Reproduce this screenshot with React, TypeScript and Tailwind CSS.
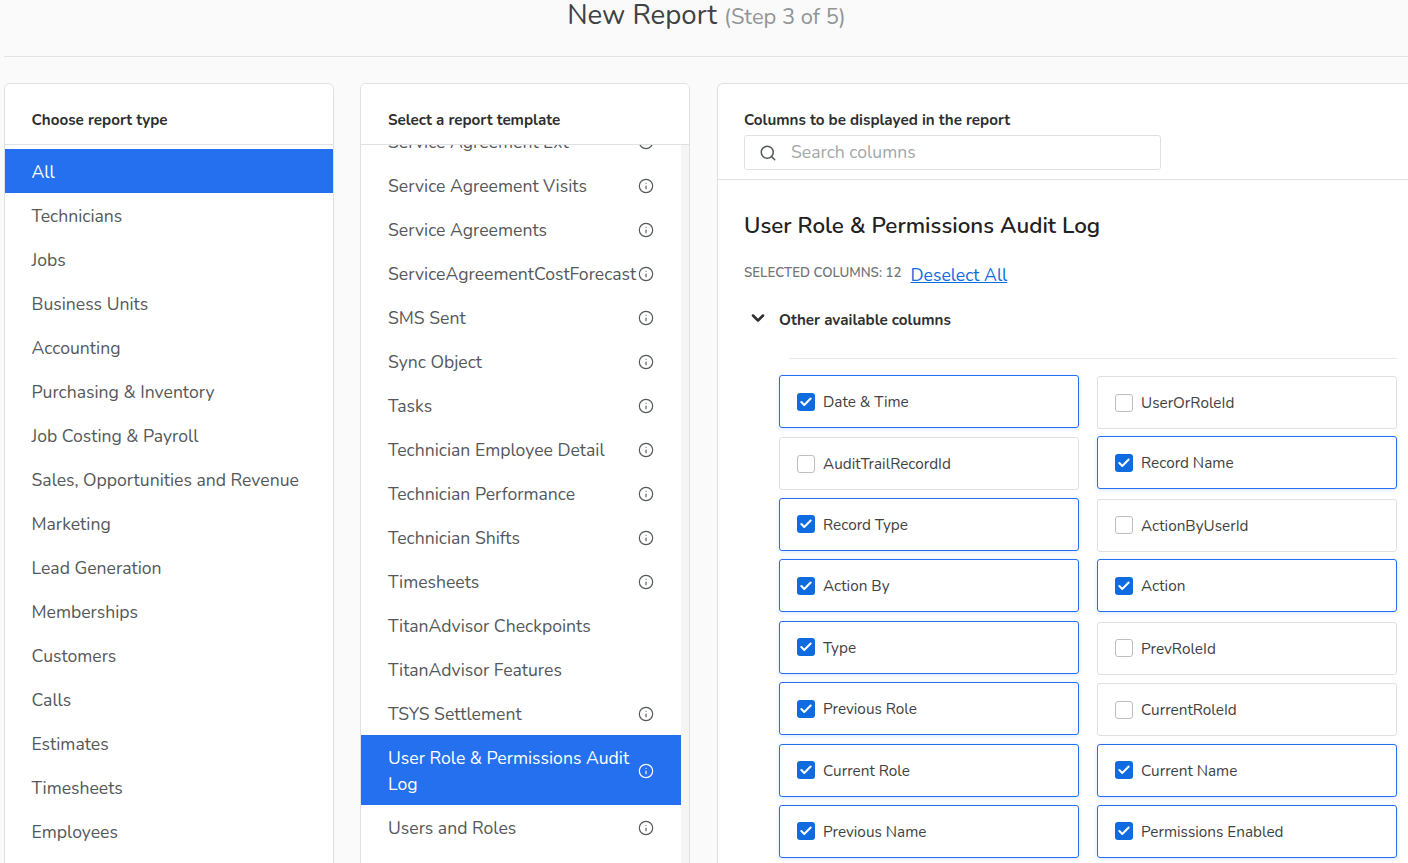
import React from 'react';
import { Info, Search, ChevronDown, Check } from 'lucide-react';

const reportTypes = [
  'All',
  'Technicians',
  'Jobs',
  'Business Units',
  'Accounting',
  'Purchasing & Inventory',
  'Job Costing & Payroll',
  'Sales, Opportunities and Revenue',
  'Marketing',
  'Lead Generation',
  'Memberships',
  'Customers',
  'Calls',
  'Estimates',
  'Timesheets',
  'Employees',
];

const templates = [
  { name: 'Service Agreement Ext', info: true },
  { name: 'Service Agreement Visits', info: true },
  { name: 'Service Agreements', info: true },
  { name: 'ServiceAgreementCostForecast', info: true },
  { name: 'SMS Sent', info: true },
  { name: 'Sync Object', info: true },
  { name: 'Tasks', info: true },
  { name: 'Technician Employee Detail', info: true },
  { name: 'Technician Performance', info: true },
  { name: 'Technician Shifts', info: true },
  { name: 'Timesheets', info: true },
  { name: 'TitanAdvisor Checkpoints', info: false },
  { name: 'TitanAdvisor Features', info: false },
  { name: 'TSYS Settlement', info: true },
  { name: 'User Role & Permissions Audit Log', info: true, active: true },
  { name: 'Users and Roles', info: true },
];

const columns = [
  { name: 'Date & Time', on: true },
  { name: 'UserOrRoleId', on: false },
  { name: 'AuditTrailRecordId', on: false },
  { name: 'Record Name', on: true },
  { name: 'Record Type', on: true },
  { name: 'ActionByUserId', on: false },
  { name: 'Action By', on: true },
  { name: 'Action', on: true },
  { name: 'Type', on: true },
  { name: 'PrevRoleId', on: false },
  { name: 'Previous Role', on: true },
  { name: 'CurrentRoleId', on: false },
  { name: 'Current Role', on: true },
  { name: 'Current Name', on: true },
  { name: 'Previous Name', on: true },
  { name: 'Permissions Enabled', on: true },
];

const ColumnOption = ({ name, on }: { name: string; on: boolean }) => (
  <div
    className={
      on
        ? 'flex items-center h-[53px] rounded-[3px] border border-[#2470ef] bg-white pl-[17px] shadow-[0_1px_4px_rgba(36,112,239,0.18)]'
        : 'flex items-center h-[53px] mt-px rounded-[3px] border border-[#dfe0e1] bg-white pl-[17px]'
    }
  >
    {on ? (
      <span className="flex items-center justify-center w-[18px] h-[18px] rounded-[3px] bg-[#0f6be0] text-white">
        <Check size={14} strokeWidth={3.5} />
      </span>
    ) : (
      <span className="w-[18px] h-[18px] rounded-[3px] border border-[#bcbfc2] bg-white" />
    )}
    <span className="ml-[8px] pt-[2px] text-[15.3px] text-[#3f4243]">{name}</span>
  </div>
);

export default function App() {
  return (
    <div className="h-[863px] overflow-hidden bg-[#fafafa] font-['Nunito','Lato','Liberation_Sans',sans-serif]">
      <div className="ml-1 h-[57px] border-b border-[#e2e3e4] pl-[1px] text-center leading-[30px] text-[#3f4243]">
        <span className="text-[27.6px]">New Report</span>
        <span className="ml-[7px] text-[21.9px] text-[#929597]">(Step 3 of 5)</span>
      </div>

      <div className="ml-1 mt-[26px] flex items-start">
        <div className="w-[330px] h-[800px] shrink-0 overflow-hidden rounded-t-md border border-[#dfe0e1] bg-white">
          <div className="h-[61px] border-b border-[#dfe0e1] pl-[26.5px] pt-[25px] text-[15.2px] font-bold text-[#2d2f30]">
            Choose report type
          </div>
          <div className="mt-1">
            {reportTypes.map((t, i) => (
              <div
                key={t}
                className={`h-[44px] pl-[26.5px] pt-px text-[17.6px] leading-[44px] ${
                  i === 0 ? 'bg-[#2470ef] text-white' : 'text-[#55585a]'
                }`}
              >
                {t}
              </div>
            ))}
          </div>
        </div>

        <div className="ml-[26px] w-[330px] h-[800px] shrink-0 overflow-hidden rounded-t-md border border-[#dfe0e1] bg-white">
          <div className="relative z-10 h-[61px] border-b border-[#dfe0e1] bg-white pl-[27px] pt-[25px] text-[15.2px] font-bold text-[#2d2f30]">
            Select a report template
          </div>
          <div className="flex h-full">
            <div className="w-[320px] -mt-[26px]">
              {templates.map((t) => (
                <div
                  key={t.name}
                  className={`flex items-center pl-[27px] pr-[27px] pt-[2px] text-[17.6px] ${
                    t.active ? 'h-[70px] bg-[#2470ef] text-white' : 'h-[44px] text-[#55585a]'
                  }`}
                >
                  <span className="flex-1 leading-[26px]">{t.name}</span>
                  {t.info && <Info size={16} strokeWidth={1.75} className="shrink-0" />}
                </div>
              ))}
            </div>
            <div className="w-[8px] bg-[#f5f5f5]" />
          </div>
        </div>

        <div className="ml-[27px] flex-1 h-[800px] overflow-hidden rounded-tl-md border-l border-t border-[#dfe0e1] bg-white">
          <div className="h-[96px] border-b border-[#dfe0e1] pl-[26px] pt-[26px]">
            <div className="text-[15.2px] leading-[20px] font-bold text-[#2d2f30]">Columns to be displayed in the report</div>
            <div className="mt-[5px] flex items-center w-[417px] h-[35px] rounded-[3px] border border-[#dfe0e1] pl-[14px]">
              <Search size={18} strokeWidth={2} className="text-[#55585a]" />
              <span className="ml-[14px] text-[17.6px] text-[#a4a7a9]">Search columns</span>
            </div>
          </div>

          <div className="pl-[26px]">
            <h2 className="mt-[32px] text-[22.4px] leading-[28px] font-semibold text-[#1f2122]">
              User Role &amp; Permissions Audit Log
            </h2>
            <div className="mt-[22px] flex items-center h-[24px]">
              <span className="text-[13.3px] font-semibold text-[#737679]">SELECTED COLUMNS: 12</span>
              <a className="ml-[9px] mt-[2px] text-[17.6px] text-[#0f6be0] underline">Deselect All</a>
            </div>
            <div className="mt-[22px] flex items-center h-[24px]">
              <ChevronDown size={20} strokeWidth={3} className="-mt-[4px] ml-[4px] text-[#2d2f30]" />
              <span className="ml-[11px] text-[15.2px] font-bold text-[#2d2f30]">Other available columns</span>
            </div>
            <div className="mt-[26px] ml-[45px] w-[608px] border-t border-[#e8e9ea]" />
            <div className="mt-[16px] ml-[35px] w-[618px] grid grid-cols-2 gap-x-[18px] auto-rows-[53px] gap-y-[8.43px]">
              {columns.map((c) => (
                <ColumnOption key={c.name} name={c.name} on={c.on} />
              ))}
            </div>
          </div>
        </div>
      </div>
    </div>
  );
}
